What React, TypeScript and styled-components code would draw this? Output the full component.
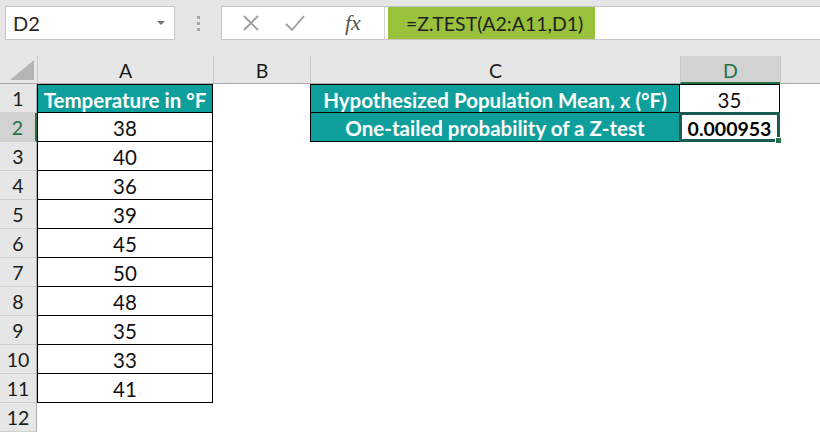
import React from 'react';
import styled, { createGlobalStyle, css } from 'styled-components';

const GlobalStyle = createGlobalStyle`
    html, body {
        margin: 0;
        padding: 0;
        background: #ffffff;
        font-family: Lato, "Liberation Sans", sans-serif;
    }
`;

const Page = styled.div`
    width: 820px;
    height: 432px;
    overflow: hidden;
    background: #ffffff;
`;

const TopBar = styled.div`
    height: 56px;
    background: #e6e6e6;
    display: flex;
    align-items: flex-start;
    padding: 6px 0 0 5px;
    box-sizing: border-box;
`;

const NameBox = styled.div`
    width: 170px;
    height: 34px;
    box-sizing: border-box;
    background: #ffffff;
    border: 1px solid #c6c6c6;
    display: flex;
    align-items: center;
    justify-content: space-between;
    padding: 0 9px 0 7px;
    font-size: 20px;
    color: #262626;
`;

const Caret = styled.span`
    width: 0;
    height: 0;
    border-left: 4px solid transparent;
    border-right: 4px solid transparent;
    border-top: 4px solid #737373;
`;

const Grip = styled.div`
    width: 46px;
    height: 34px;
    display: flex;
    flex-direction: column;
    align-items: center;
    justify-content: center;
    gap: 3px;

    span {
        width: 3px;
        height: 3px;
        background: #a6a6a6;
    }
`;

const FormulaArea = styled.div`
    flex: 1;
    height: 34px;
    box-sizing: border-box;
    background: #ffffff;
    border: 1px solid #c6c6c6;
    border-right: none;
    display: flex;
    align-items: stretch;
`;

const IconStrip = styled.div`
    width: 163px;
    display: flex;
    align-items: center;
    border-right: 1px solid #d4d4d4;
    padding-left: 18px;
    gap: 21px;
    box-sizing: border-box;
`;

const Fx = styled.span`
    font-family: "Liberation Serif", serif;
    font-style: italic;
    font-size: 22px;
    color: #555555;
    margin-left: 17px;
`;

const FormulaText = styled.div`
    margin: 0 0 0 3px;
    background: #99c13c;
    width: 207px;
    display: flex;
    align-items: center;
    padding-left: 18px;
    box-sizing: border-box;
    font-size: 19.5px;
    color: #1f1f1f;
    white-space: nowrap;
`;

const Sheet = styled.div`
    display: grid;
    grid-template-columns: 37px 176px 97px 370px 100px 1fr;
    grid-template-rows: 28px repeat(12, 29px);
`;

const ColHead = styled.div<{ $active?: boolean }>`
    background: ${p => (p.$active ? '#d2d2d2' : '#e6e6e6')};
    border-left: 1px solid #c8c8c8;
    border-bottom: ${p => (p.$active ? '2px solid #217346' : '1px solid #ababab')};
    box-sizing: border-box;
    display: flex;
    align-items: center;
    justify-content: center;
    font-size: 19.5px;
    color: ${p => (p.$active ? '#217346' : '#1a1a1a')};
    padding-top: 2px;
`;

const Corner = styled.div`
    background: #e6e6e6;
    border-bottom: 1px solid #ababab;
    position: relative;
    box-sizing: border-box;

    &::after {
        content: '';
        position: absolute;
        right: 3px;
        bottom: 3px;
        width: 0;
        height: 0;
        border-left: 24px solid transparent;
        border-bottom: 20px solid #b5b5b5;
    }
`;

const RowHead = styled.div<{ $active?: boolean }>`
    background: ${p => (p.$active ? '#d2d2d2' : '#e6e6e6')};
    border-right: ${p => (p.$active ? '2px solid #217346' : '1px solid #ababab')};
    border-bottom: 1px solid #d0d0d0;
    box-sizing: border-box;
    display: flex;
    align-items: center;
    justify-content: center;
    font-size: 19.5px;
    padding-top: 1px;
    color: ${p => (p.$active ? '#217346' : '#1a1a1a')};
`;

const Cell = styled.div<{ $fill?: boolean; $boxed?: boolean; $top?: boolean; $left?: boolean; $bold?: boolean }>`
    box-sizing: border-box;
    display: flex;
    align-items: center;
    justify-content: center;
    font-size: 20.5px;
    padding-top: 2px;
    white-space: nowrap;
    color: #111111;
    background: #ffffff;
    ${p =>
        p.$boxed &&
        css`
            border-right: 1px solid #000;
            border-bottom: 1px solid #000;
        `}
    ${p => p.$top && css`border-top: 1px solid #000;`}
    ${p => p.$left && css`border-left: 1px solid #000;`}
    ${p =>
        p.$fill &&
        css`
            background: #0e9f9d;
            color: #ffffff;
        `}
    ${p => p.$bold && css`font-weight: 700;`}
`;

const ActiveCell = styled.div`
    box-sizing: border-box;
    position: relative;
    margin: -1px 0 0 -1px;
    border: 3px solid #1d5a52;
    background: #ffffff;
    display: flex;
    align-items: center;
    justify-content: center;
    padding-top: 2px;
    font-size: 19.5px;
    font-weight: 700;
    color: #000;

    &::after {
        content: '';
        position: absolute;
        right: -5px;
        bottom: -5px;
        width: 5px;
        height: 5px;
        background: #217346;
        border: 1px solid #ffffff;
    }
`;

const temps = [38, 40, 36, 39, 45, 50, 48, 35, 33, 41];

const Cancel = () => (
    <svg width="22" height="22" viewBox="0 0 22 22">
        <path d="M4 4 L18 18 M18 4 L4 18" stroke="#9c9c9c" strokeWidth="1.8" fill="none" />
    </svg>
);

const Check = () => (
    <svg width="24" height="22" viewBox="0 0 24 22">
        <path d="M3 12 L9 18 L21 4" stroke="#9c9c9c" strokeWidth="1.8" fill="none" />
    </svg>
);

const App = () => {
    const rows = [];
    for (let r = 1; r <= 12; r++) {
        const t = r >= 2 && r <= 11 ? temps[r - 2] : null;
        rows.push(
            <React.Fragment key={r}>
                <RowHead $active={r === 2}>{r}</RowHead>
                {r === 1 ? (
                    <Cell $fill $boxed $top $left $bold>Temperature in °F</Cell>
                ) : t !== null ? (
                    <Cell $boxed $left>{t}</Cell>
                ) : (
                    <Cell />
                )}
                <Cell />
                {r === 1 && <Cell $fill $boxed $top $left $bold>Hypothesized Population Mean, x (°F)</Cell>}
                {r === 2 && <Cell $fill $boxed $left $bold>One-tailed probability of a Z-test</Cell>}
                {r > 2 && <Cell />}
                {r === 1 && <Cell $boxed $top>35</Cell>}
                {r === 2 && <ActiveCell>0.000953</ActiveCell>}
                {r > 2 && <Cell />}
                <Cell />
            </React.Fragment>
        );
    }

    return (
        <Page>
            <GlobalStyle />
            <TopBar>
                <NameBox>
                    D2
                    <Caret />
                </NameBox>
                <Grip>
                    <span />
                    <span />
                    <span />
                </Grip>
                <FormulaArea>
                    <IconStrip>
                        <Cancel />
                        <Check />
                        <Fx>fx</Fx>
                    </IconStrip>
                    <FormulaText>=Z.TEST(A2:A11,D1)</FormulaText>
                </FormulaArea>
            </TopBar>
            <Sheet>
                <Corner />
                <ColHead>A</ColHead>
                <ColHead>B</ColHead>
                <ColHead>C</ColHead>
                <ColHead $active>D</ColHead>
                <ColHead />
                {rows}
            </Sheet>
        </Page>
    );
};

export default App;
